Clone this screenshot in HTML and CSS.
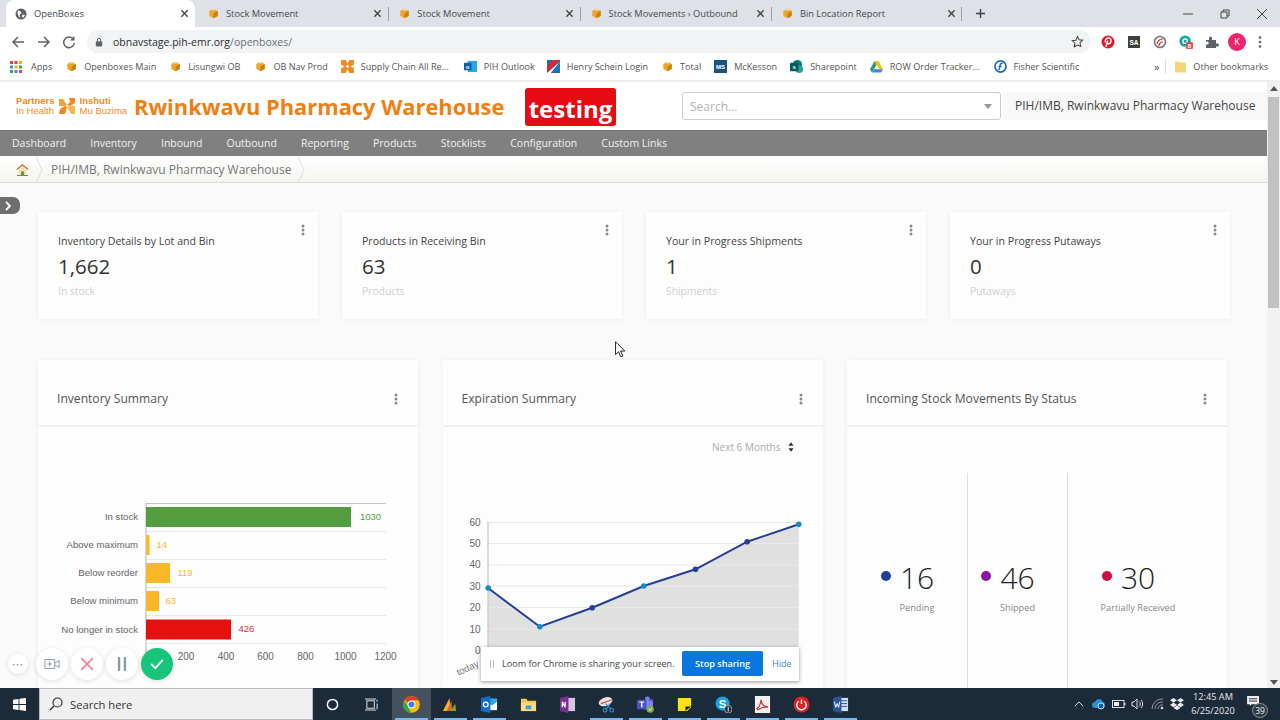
FILE: index.html
```html
<!DOCTYPE html>
<html lang="en">
<head>
<meta charset="utf-8">
<title>OpenBoxes</title>
<link rel="stylesheet" href="styles.css">
</head>
<body>
<svg class="defs" width="0" height="0" aria-hidden="true">
  <symbol id="ob" viewBox="0 0 12 12">
    <path d="M6 .8l4.600 2.600v5.200L6 11.200 1.400 8.600V3.400z" fill="#eba72c"/>
    <path d="M6 6l4.600-2.600v5.200L6 11.200z" fill="#c97f12"/>
    <path d="M3.500 2l2.500-1.200L8.500 2 6 3.400z" fill="#f8d98a"/>
  </symbol>
  <symbol id="kebab" viewBox="0 0 4 12">
    <circle cx="2" cy="2" r="1.500"/><circle cx="2" cy="6" r="1.500"/><circle cx="2" cy="10" r="1.500"/>
  </symbol>
  <symbol id="cross" viewBox="0 0 10 10">
    <path d="M1.500 1.500l7 7M8.500 1.500l-7 7" fill="none" stroke="currentColor" stroke-width="1.500"/>
  </symbol>
</svg>
<div class="screen">
  <div class="tabstrip">
    <div class="tab tab-active">
      <svg class="tab-icon" viewBox="0 0 12 12"><circle cx="6" cy="6" r="5.500" fill="#5f6368"/><path d="M3 2.500l3 1 .5 2-2 1 1 3.500-2-2-1-3zM7.500 6.500l2.500.5-1.500 2.500-1.500-.5z" fill="#fff"/></svg>
      <span class="tab-title">OpenBoxes</span>
      <svg class="tab-close"><use href="#cross"/></svg>
    </div>
    <div class="tab"><svg class="tab-icon"><use href="#ob"/></svg><span class="tab-title">Stock Movement</span><svg class="tab-close"><use href="#cross"/></svg></div>
    <div class="tab tab-sep"><svg class="tab-icon"><use href="#ob"/></svg><span class="tab-title">Stock Movement</span><svg class="tab-close"><use href="#cross"/></svg></div>
    <div class="tab tab-sep"><svg class="tab-icon"><use href="#ob"/></svg><span class="tab-title">Stock Movements › Outbound</span><svg class="tab-close"><use href="#cross"/></svg></div>
    <div class="tab tab-sep tab-end"><svg class="tab-icon"><use href="#ob"/></svg><span class="tab-title">Bin Location Report</span><svg class="tab-close"><use href="#cross"/></svg></div>
    <svg class="new-tab" viewBox="0 0 12 12"><path d="M6 1v10M1 6h10" stroke="#3c4043" stroke-width="1.500" fill="none"/></svg>
    <div class="window-controls">
      <svg viewBox="0 0 12 12"><path d="M1 6h10" stroke="#444" fill="none"/></svg>
      <svg viewBox="0 0 12 12"><path d="M2 4h6v6H2zM4 4V2h6v6H8" stroke="#444" fill="none"/></svg>
      <svg viewBox="0 0 12 12"><path d="M1 1l10 10M11 1L1 11" stroke="#444" fill="none"/></svg>
    </div>
  </div>

  <div class="toolbar">
    <svg class="tool" viewBox="0 0 14 14"><path d="M13 7H2M7 2L2 7l5 5" fill="none" stroke="#5f6368" stroke-width="1.500"/></svg>
    <svg class="tool" viewBox="0 0 14 14"><path d="M1 7h11M7 2l5 5-5 5" fill="none" stroke="#5f6368" stroke-width="1.500"/></svg>
    <svg class="tool" viewBox="0 0 14 14"><path d="M11.500 4.500A5.300 5.300 0 1 0 12.300 8" fill="none" stroke="#5f6368" stroke-width="1.500"/><path d="M12.500 1v4.500H8z" fill="#5f6368"/></svg>
    <div class="omnibox">
      <svg class="lock" viewBox="0 0 10 12"><rect x="1" y="5" width="8" height="6.500" rx="1" fill="#5f6368"/><path d="M3 5V3.500a2 2 0 0 1 4 0V5" fill="none" stroke="#5f6368" stroke-width="1.200"/></svg>
      <span class="url">obnavstage.pih-emr.org<span class="url-path">/openboxes/</span></span>
      <svg class="star" viewBox="0 0 14 14"><path d="M7 1.500l1.700 3.600 3.900.5-2.900 2.700.8 3.900L7 10.800l-3.500 1.900.8-3.900-2.900-2.700 3.900-.5z" fill="none" stroke="#444" stroke-width="1.100"/></svg>
    </div>
    <div class="extensions">
      <svg viewBox="0 0 14 14"><circle cx="7" cy="7" r="6.500" fill="#d81e2c"/><path d="M5 12l1.700-6.500M4.500 7.500C3.500 4.500 6 3 7.500 3S10.500 4.200 10 6.500 7.500 9.500 6.300 8" fill="none" stroke="#fff" stroke-width="1.400"/></svg>
      <svg viewBox="0 0 14 14"><rect x="1" y="1" width="12" height="12" fill="#3f3f3f"/><text x="7" y="9.500" class="ext-text">SA</text></svg>
      <svg viewBox="0 0 14 14"><circle cx="7" cy="7" r="5.500" fill="none" stroke="#777" stroke-width="1.600"/><path d="M4 9c1-4 3-5 6-5M6 11c0-2 1-4 4-4" fill="none" stroke="#c0392b" stroke-width="1.200"/></svg>
      <svg viewBox="0 0 16 16"><circle cx="7" cy="7" r="6.500" fill="#14a8a0"/><circle cx="7" cy="7" r="2.500" fill="none" stroke="#fff" stroke-width="1.500"/><rect x="8" y="8" width="8" height="8" rx="1.500" fill="#d9534f"/><text x="12" y="14.500" class="ext-badge">8</text></svg>
      <svg viewBox="0 0 14 14"><path d="M1 5h3V3a1.500 1.500 0 0 1 3 0v2h4v3.500h1.500a1.500 1.500 0 0 1 0 3H11V13H1V9.500h1.200a1.500 1.500 0 0 0 0-3H1z" fill="#5f6368"/></svg>
      <span class="avatar">K</span>
      <svg viewBox="0 0 4 14"><circle cx="2" cy="2.500" r="1.300" fill="#5f6368"/><circle cx="2" cy="7" r="1.300" fill="#5f6368"/><circle cx="2" cy="11.500" r="1.300" fill="#5f6368"/></svg>
    </div>
  </div>

  <div class="bookmarks">
    <div class="bookmark bm-apps"><svg viewBox="0 0 12 12"><g fill="#e8453c"><rect width="3" height="3"/><rect x="4.500" width="3" height="3"/></g><rect x="9" width="3" height="3" fill="#f4b400"/><rect y="4.500" width="3" height="3" fill="#4285f4"/><rect x="4.500" y="4.500" width="3" height="3" fill="#f4b400"/><rect x="9" y="4.500" width="3" height="3" fill="#34a853"/><rect y="9" width="3" height="3" fill="#34a853"/><rect x="4.500" y="9" width="3" height="3" fill="#4285f4"/><rect x="9" y="9" width="3" height="3" fill="#e8453c"/></svg><span>Apps</span></div>
    <div class="bookmark bm-main"><svg><use href="#ob"/></svg><span>Openboxes Main</span></div>
    <div class="bookmark bm-lis"><svg><use href="#ob"/></svg><span>Lisungwi OB</span></div>
    <div class="bookmark bm-nav"><svg><use href="#ob"/></svg><span>OB Nav Prod</span></div>
    <div class="bookmark bm-sup"><svg viewBox="0 0 14 14"><path d="M0 0h5l2 4 2-4h5v5l-4 2 4 2v5H9L7 10l-2 4H0V9l4-2-4-2z" fill="#ef8d22"/><circle cx="7" cy="7" r="1.500" fill="#fff"/></svg><span>Supply Chain All Re...</span></div>
    <div class="bookmark bm-out"><svg viewBox="0 0 14 14"><rect x="4" y="1" width="10" height="12" fill="#28a8ea"/><rect y="3" width="8" height="8" fill="#0f5fa8"/><text x="4" y="9.500" class="ext-text">o</text></svg><span>PIH Outlook</span></div>
    <div class="bookmark bm-hs"><svg viewBox="0 0 14 14"><rect width="14" height="14" fill="#1d6fb8"/><path d="M0 14L14 0H6L0 7z" fill="#e0262b"/><path d="M0 14L14 2 4 14z" fill="#fff"/></svg><span>Henry Schein Login</span></div>
    <div class="bookmark bm-tot"><svg><use href="#ob"/></svg><span>Total</span></div>
    <div class="bookmark bm-mck"><svg viewBox="0 0 14 14"><rect width="14" height="14" fill="#16557f"/><text x="7" y="10" class="ext-text">MS</text></svg><span>McKesson</span></div>
    <div class="bookmark bm-shp"><svg viewBox="0 0 14 14"><circle cx="8" cy="5" r="5" fill="#0b7c7c"/><circle cx="10" cy="10" r="4" fill="#23a3a3"/><rect y="3" width="9" height="9" rx="1" fill="#075a5a"/><text x="4.500" y="10" class="ext-text">s</text></svg><span>Sharepoint</span></div>
    <div class="bookmark bm-row"><svg viewBox="0 0 14 14"><path d="M5 1h4l5 9H10z" fill="#fbbc05"/><path d="M5 1L0 10l2 3.500L7 5z" fill="#1fa463"/><path d="M2 13.500h10l2-3.500H4z" fill="#4285f4"/></svg><span>ROW Order Tracker...</span></div>
    <div class="bookmark bm-fis"><svg viewBox="0 0 14 14"><circle cx="7" cy="7" r="6" fill="none" stroke="#1b6fb8" stroke-width="1.800"/><path d="M9.500 3.500C7 3 6.500 5 6.300 7L5.500 11M4.800 7h3.500" fill="none" stroke="#1b6fb8" stroke-width="1.500"/></svg><span>Fisher Scientific</span></div>
    <span class="bm-more">»</span>
    <div class="bookmark bm-other"><svg viewBox="0 0 12 14"><path d="M0 1h4l1 1h7v11H0z" fill="#f6d57a"/></svg><span>Other bookmarks</span></div>
  </div>

  <div class="viewport">
    <div class="page">
      <header class="site-header">
        <div class="logo">
          <div class="logo-words"><b>Partners</b><span>In Health</span></div>
          <svg class="logo-mark" viewBox="0 0 16 16"><path d="M0 1h4l4 6-2 1H0z" fill="#f2a33a"/><path d="M10 0h6v5l-5 3-3-1 3-3z" fill="#f08a1d"/><path d="M0 16l1-5 5-3 2 1-2 7z" fill="#f08a1d"/><path d="M8 9l3-1h5v8h-4z" fill="#f7b84b"/></svg>
          <div class="logo-words"><b>Inshuti</b><span>Mu Buzima</span></div>
        </div>
        <div class="site-title">Rwinkwavu Pharmacy Warehouse</div>
        <div class="env-badge">testing</div>
        <div class="search-box"><span>Search...</span><i class="caret"></i></div>
        <div class="location">PIH/IMB, Rwinkwavu Pharmacy Warehouse</div>
      </header>
      <nav class="main-nav">
        <a>Dashboard</a><a>Inventory</a><a>Inbound</a><a>Outbound</a><a>Reporting</a><a>Products</a><a>Stocklists</a><a>Configuration</a><a>Custom Links</a>
      </nav>
      <div class="breadcrumb">
        <svg class="home" viewBox="0 0 14 14"><path d="M7 1L0 7h2l5-4 5 4h2z" fill="#c8702a"/><path d="M3 7l4-3 4 3v6H3z" fill="#f3e3b0"/><rect x="5.500" y="9" width="3" height="4" fill="#6d8a3c"/><rect x="1" y="13" width="12" height="1" fill="#4b8f3a"/></svg>
        <svg class="crumb-sep" viewBox="0 0 8 26"><path d="M1 0l6 13-6 13" fill="none" stroke="#ddd"/></svg>
        <span>PIH/IMB, Rwinkwavu Pharmacy Warehouse</span>
        <svg class="crumb-sep" viewBox="0 0 8 26"><path d="M1 0l6 13-6 13" fill="none" stroke="#ddd"/></svg>
      </div>
      <main class="content">
        <section class="tiles">
          <article class="tile"><svg class="kebab-sm"><use href="#kebab"/></svg><h3>Inventory Details by Lot and Bin</h3><p class="tile-num">1,662</p><p class="tile-sub">In stock</p></article>
          <article class="tile"><svg class="kebab-sm"><use href="#kebab"/></svg><h3>Products in Receiving Bin</h3><p class="tile-num">63</p><p class="tile-sub">Products</p></article>
          <article class="tile"><svg class="kebab-sm"><use href="#kebab"/></svg><h3>Your in Progress Shipments</h3><p class="tile-num">1</p><p class="tile-sub">Shipments</p></article>
          <article class="tile"><svg class="kebab-sm"><use href="#kebab"/></svg><h3>Your in Progress Putaways</h3><p class="tile-num">0</p><p class="tile-sub">Putaways</p></article>
        </section>
        <section class="panels">
          <article class="panel">
            <div class="panel-head"><h2>Inventory Summary</h2><svg class="kebab-lg"><use href="#kebab"/></svg></div>
            <svg class="chart" viewBox="38 427 380 260" width="380" height="260">
              <g class="grid-line"><path d="M146 531.500h240M146 559.500h240M146 587.500h240M146 615.500h240M146 643.500h240"/></g>
              <path d="M146 503.500h240M146 503v150" class="axis"/>
              <rect x="146" y="507" width="205" height="20" fill="#549e3f"/>
              <rect x="146" y="535" width="3.500" height="20" fill="#fbb826"/>
              <rect x="146" y="563" width="24" height="20" fill="#fbb826"/>
              <rect x="146" y="591" width="13" height="20" fill="#fbb826"/>
              <rect x="146" y="619.500" width="85" height="20" fill="#e61010"/>
              <g class="bar-label">
                <text x="138" y="520">In stock</text><text x="138" y="548">Above maximum</text><text x="138" y="576">Below reorder</text><text x="138" y="604">Below minimum</text><text x="138" y="633">No longer in stock</text>
              </g>
              <g class="bar-val">
                <text x="360" y="520" fill="#549e3f">1030</text><text x="156.500" y="548" fill="#fbb826">14</text><text x="177.500" y="576" fill="#fbb826">119</text><text x="165.500" y="604" fill="#fbb826">63</text><text x="238.500" y="632" fill="#d33">426</text>
              </g>
              <g class="tick">
                <text x="186" y="660">200</text><text x="226" y="660">400</text><text x="265.500" y="660">600</text><text x="305.500" y="660">800</text><text x="345.500" y="660">1000</text><text x="385.500" y="660">1200</text>
              </g>
            </svg>
          </article>
          <article class="panel">
            <div class="panel-head"><h2>Expiration Summary</h2><svg class="kebab-lg"><use href="#kebab"/></svg></div>
            <div class="range"><span>Next 6 Months</span><svg viewBox="0 0 7 11"><path d="M3.500 0l3 4H.5zM3.500 11l-3-4h6z" fill="#333"/></svg></div>
            <svg class="chart" viewBox="442.500 465 380 222" width="380" height="222">
              <path d="M487.500 588L539.300 626.700 591.700 607.700 643.300 586 695 569.300 746.700 541.700 798.300 524.300V650H487.500z" fill="#e0e0e0"/>
              <path class="grid-line" d="M487.500 522.500H798M487.500 543.500H798M487.500 565H798M487.500 586H798M487.500 607.500H798M487.500 629H798"/>
              <path class="axis" d="M487.500 522v130"/>
              <path d="M487.500 588L539.300 626.700 591.700 607.700 643.300 586 695 569.300 746.700 541.700 798.300 524.300" fill="none" stroke="#253f92" stroke-width="2"/>
              <g fill="#0f8fc8"><circle cx="487.700" cy="588" r="2.800"/><circle cx="539.300" cy="626.700" r="2.800"/><circle cx="643.300" cy="586" r="2.800"/><circle cx="798.300" cy="524.300" r="2.800"/></g>
              <g fill="#253f92"><circle cx="591.700" cy="607.700" r="2.800"/><circle cx="695" cy="569.300" r="2.800"/><circle cx="746.700" cy="541.700" r="2.800"/></g>
              <g class="y-tick">
                <text x="480" y="526">60</text><text x="480" y="547">50</text><text x="480" y="568">40</text><text x="480" y="589.500">30</text><text x="480" y="611">20</text><text x="480" y="632.500">10</text><text x="480" y="653.500">0</text>
              </g>
              <text class="x-tick" transform="translate(479 666) rotate(-25)">today</text>
            </svg>
          </article>
          <article class="panel">
            <div class="panel-head"><h2>Incoming Stock Movements By Status</h2><svg class="kebab-lg"><use href="#kebab"/></svg></div>
            <div class="status-grid">
              <div class="status status-a"><p class="status-num"><i class="dot dot-blue"></i>16</p><p class="status-label">Pending</p></div>
              <div class="status status-b"><p class="status-num"><i class="dot dot-purple"></i>46</p><p class="status-label">Shipped</p></div>
              <div class="status status-c"><p class="status-num"><i class="dot dot-red"></i>30</p><p class="status-label">Partially Received</p></div>
            </div>
          </article>
        </section>
      </main>
    </div>
    <div class="scrollbar">
      <svg class="sb-arrow" viewBox="0 0 8 5"><path d="M4 0l4 5H0z" fill="#555"/></svg>
      <div class="sb-thumb"></div>
      <svg class="sb-arrow sb-down" viewBox="0 0 8 5"><path d="M4 5L8 0H0z" fill="#555"/></svg>
    </div>
  </div>

  <footer class="taskbar">
    <div class="start"><svg viewBox="0 0 14 14"><path d="M0 2l6-1v5.500H0zM7 .8L14 0v6.500H7zM0 7.500h6V13l-6-1zM7 7.500h7V14l-7-1z" fill="#fff"/></svg></div>
    <div class="task-search"><svg viewBox="0 0 14 14"><circle cx="8.500" cy="5.500" r="4.500" fill="none" stroke="#333" stroke-width="1.200"/><path d="M5 9l-4 4" stroke="#333" stroke-width="1.400"/></svg><span>Search here</span></div>
    <div class="task-icon task-sys"><svg viewBox="0 0 14 14"><circle cx="7" cy="7" r="5.500" fill="none" stroke="#fff" stroke-width="1.600"/></svg></div>
    <div class="task-icon task-sys"><svg viewBox="0 0 14 14"><path d="M2 3h8v8H2zM0 1h12M0 13h12M13 2v2M13 6v6" fill="none" stroke="#ddd" stroke-width="1.100"/></svg></div>
    <div class="task-icon task-chrome on"><svg viewBox="0 0 24 24"><circle cx="12" cy="12" r="10.500" fill="#fbbc05"/><path d="M12 1.500a10.500 10.500 0 0 1 9.100 5.200H12l-5 3-4.100-4.700A10.500 10.500 0 0 1 12 1.500z" fill="#e33b2e"/><path d="M2.900 6.700L8 15l3.500 7.500A10.500 10.500 0 0 1 2.900 6.700z" fill="#2da94f"/><circle cx="12" cy="12" r="5" fill="#fff"/><circle cx="12" cy="12" r="3.800" fill="#3f7fe8"/></svg></div>
    <div class="task-icon on"><svg viewBox="0 0 18 18"><path d="M1 16L8 2l1 14z" fill="#f6b12c"/><path d="M5 16l5-11 1 11z" fill="#e0632c"/><path d="M9 16l5-8 1 8z" fill="#7aa82e"/></svg></div>
    <div class="task-icon on"><svg viewBox="0 0 18 18"><rect x="6" y="3" width="11" height="12" fill="#fff"/><path d="M6 3h11v3l-5.500 4L6 6z" fill="#28a8ea"/><path d="M0 2l10-2v18L0 16z" fill="#0f6fc6"/><circle cx="5" cy="9" r="2.500" fill="none" stroke="#fff" stroke-width="1.400"/></svg></div>
    <div class="task-icon"><svg viewBox="0 0 18 18"><path d="M1 3h6l1 2h9v11H1z" fill="#f4c552"/><rect x="1" y="7" width="16" height="9" fill="#fadb85"/><rect x="6" y="10" width="6" height="4" fill="#3f9fd8"/></svg></div>
    <div class="task-icon"><svg viewBox="0 0 18 18"><rect x="8" y="2" width="9" height="14" fill="#d9c3e0"/><path d="M1 2l9-2v18l-9-2z" fill="#7b2f90"/><path d="M3.500 12V6l3 6V6" fill="none" stroke="#fff" stroke-width="1.300"/></svg></div>
    <div class="task-icon on"><svg viewBox="0 0 18 18"><ellipse cx="8" cy="6" rx="7.500" ry="4.500" fill="#e8e2e2" transform="rotate(-20 8 6)"/><path d="M3 8l12-4" stroke="#c0504d" stroke-width="1.300"/><path d="M8 8l6 6M13 8l-5 7" stroke="#2a8fd0" stroke-width="1.200"/><circle cx="7.500" cy="15" r="2" fill="none" stroke="#2a8fd0" stroke-width="1.200"/><circle cx="14.500" cy="15" r="2" fill="none" stroke="#2a8fd0" stroke-width="1.200"/></svg></div>
    <div class="task-icon on"><svg viewBox="0 0 18 18"><circle cx="11" cy="3" r="2.500" fill="#7b83eb"/><circle cx="15" cy="5" r="2" fill="#5059c9"/><rect x="6" y="5" width="11" height="9" rx="2" fill="#7b83eb"/><rect y="4" width="10" height="10" rx="1" fill="#4b53bc"/><path d="M2.500 6.500h5M5 6.500v5.500" stroke="#fff" stroke-width="1.400"/><circle cx="14" cy="14" r="3.800" fill="#7cb33c"/><path d="M12.300 14l1.300 1.300 2-2.300" fill="none" stroke="#fff"/></svg></div>
    <div class="task-icon on"><svg viewBox="0 0 18 18"><path d="M2 2h14v10l-4 4H2z" fill="#ffe212"/><path d="M10 16v-5h6z" fill="#222"/></svg></div>
    <div class="task-icon on"><svg viewBox="0 0 18 18"><circle cx="8" cy="8" r="7.500" fill="#1a9fe0"/><text x="8" y="12.500" class="skype">S</text><circle cx="14" cy="14" r="4" fill="#1b2b3a" stroke="#aaa"/><path d="M14 11.500v5" stroke="#fff"/></svg></div>
    <div class="task-icon on"><svg viewBox="0 0 18 18"><rect x="1" y="0" width="16" height="18" fill="#f3f1f1"/><path d="M3 13c3-1 4-5 4.500-9 0 4 3 7 7.500 7.500-4 0-8 1-11 3z" fill="none" stroke="#c8282c" stroke-width="1.200"/></svg></div>
    <div class="task-icon on"><svg viewBox="0 0 18 18"><circle cx="9" cy="9" r="8.500" fill="#e01f26"/><path d="M6 5.500a5 5 0 1 0 6 0" fill="none" stroke="#fff" stroke-width="1.500"/><path d="M9 3.500v5" stroke="#fff" stroke-width="1.500"/></svg></div>
    <div class="task-icon on"><svg viewBox="0 0 18 18"><rect x="8" y="2" width="9" height="14" fill="#cfe0f5"/><path d="M8 5h8M8 8h8M8 11h8" stroke="#2a5699"/><path d="M1 2l9-2v18l-9-2z" fill="#2a5699"/><path d="M2.500 6l1.500 6 1.500-4 1.500 4 1.200-6" fill="none" stroke="#fff"/></svg></div>
    <div class="tray">
      <svg viewBox="0 0 12 7" class="tray-chev"><path d="M1 6l5-5 5 5" fill="none" stroke="#ddd" stroke-width="1.200"/></svg>
      <svg viewBox="0 0 14 12"><path d="M3 10a3 3 0 0 1 0-6 4 4 0 0 1 7.500-.5A3.500 3.500 0 0 1 11 10z" fill="#2a8fe0"/><circle cx="9" cy="8" r="3" fill="#0d5fa8" stroke="#cde"/></svg>
      <svg viewBox="0 0 14 10"><rect x=".5" y="1.500" width="11.500" height="7" fill="none" stroke="#ddd"/><rect x="2" y="3" width="5" height="4" fill="#eee"/><rect x="12" y="4" width="1.500" height="2" fill="#ddd"/></svg>
      <svg viewBox="0 0 14 12"><path d="M1 4h2l3-3v10L3 8H1z" fill="none" stroke="#ddd"/><path d="M8 3.500a3 3 0 0 1 0 5M10 2a5.500 5.500 0 0 1 0 8" fill="none" stroke="#ddd"/></svg>
      <svg viewBox="0 0 14 12"><path d="M1 11A10 10 0 0 1 12 1M4 11a7 7 0 0 1 8-7M7 11a4 4 0 0 1 5-4" fill="none" stroke="#999"/><circle cx="11" cy="10" r="1.300" fill="#ddd"/></svg>
      <svg viewBox="0 0 14 12"><path d="M3.500 0L7 2.300 3.500 4.600 0 2.300zM10.500 0L14 2.300l-3.500 2.300L7 2.300zM3.500 4.600L7 6.900 3.500 9.200 0 6.900zM10.500 4.600L14 6.900l-3.500 2.300L7 6.900zM7 7.600l3.500 2.300L7 12 3.500 9.900z" fill="#eee"/></svg>
    </div>
    <div class="clock"><span>12:45 AM</span><span>6/25/2020</span></div>
    <div class="notify"><svg viewBox="0 0 14 12"><path d="M0 0h13v9H5l-2 2V9H0z" fill="#eee"/><path d="M2 3h9M2 5.500h9" stroke="#1b2b3a"/></svg><span class="notify-count">39</span></div>
  </footer>

  <div class="sidebar-toggle"><svg viewBox="0 0 6 10"><path d="M1 1l4 4-4 4" fill="none" stroke="#fff" stroke-width="1.800"/></svg></div>

  <svg class="cursor" viewBox="0 0 12 18"><path d="M.5.500v14l3.500-3 2.300 5.500 2.200-1-2.300-5.300h4.500z" fill="#fff" stroke="#111"/></svg>

  <div class="loom-tools">
    <div class="lt lt-dots">···</div>
    <div class="lt"><svg viewBox="0 0 18 12"><path d="M1 1h11v10H1zM12 5l5-3v8l-5-3M4 6h5M6.500 3.500v5" fill="none" stroke="#8a9aa6" stroke-width="1.100"/></svg></div>
    <div class="lt"><svg viewBox="0 0 12 12"><path d="M1 1l10 10M11 1L1 11" stroke="#f0838a" stroke-width="1.500" fill="none"/></svg></div>
    <div class="lt"><svg viewBox="0 0 10 12"><path d="M2.500 0v12M7.500 0v12" stroke="#8a9aa6" stroke-width="2" fill="none"/></svg></div>
    <div class="lt lt-done"><svg viewBox="0 0 12 10"><path d="M1 5l3.500 3.500L11 1.500" stroke="#fff" stroke-width="1.600" fill="none"/></svg></div>
  </div>

  <div class="loom-bar">
    <span class="loom-pause"></span>
    <span class="loom-msg">Loom for Chrome is sharing your screen.</span>
    <span class="loom-stop">Stop sharing</span>
    <span class="loom-hide">Hide</span>
  </div>
</div>
</body>
</html>
```
FILE: styles.css
```css
* { box-sizing: border-box; }
html, body { margin: 0; padding: 0; }
body { font-family: "Open Sans", "Noto Sans", sans-serif; background: #fff; overflow: hidden; }
p, h2, h3 { margin: 0; font-weight: 400; }
.defs { position: absolute; }

.screen { position: relative; width: 1280px; height: 720px; display: flex; flex-direction: column; overflow: hidden; }

/* browser tabs */
.tabstrip { flex: none; height: 27px; background: #dee1e6; display: flex; align-items: center; padding-left: 6px; }
.tab { width: 191.300px; height: 27px; padding: 0 5px 0 11px; display: flex; align-items: center; font-size: 9.300px; color: #45494e; position: relative; }
.tab-active { background: #fff; border-radius: 8px 8px 0 0; width: 189px; margin-right: 2px; padding-left: 10px; }
.tab-icon { width: 11px; height: 11px; flex: none; margin-right: 7px; }
.tab-active .tab-icon { width: 12px; height: 12px; margin-left: -1px; }
.tab-title { flex: 1; white-space: nowrap; overflow: hidden; }
.tab-close { width: 9px; height: 9px; color: #444; flex: none; margin-right: 1px; }
.tab-sep::before { content: ""; position: absolute; left: 0; top: 7px; height: 14px; border-left: 1px solid #9aa0a6; }
.tab-end::after { content: ""; position: absolute; right: 0; top: 7px; height: 14px; border-left: 1px solid #9aa0a6; }
.new-tab { width: 11px; height: 11px; margin-left: 13px; }
.window-controls { margin-left: auto; display: flex; gap: 25px; padding-right: 12px; align-self: flex-start; padding-top: 8px; }
.window-controls svg { width: 12px; height: 12px; }

/* toolbar */
.toolbar { flex: none; height: 27px; background: #fff; display: flex; align-items: center; padding: 2px 0 0 11px; }
.tool { width: 14px; height: 14px; margin-right: 12px; flex: none; }
.tool:nth-child(3) { margin-left: -1px; }
.omnibox { width: 1004px; height: 23px; margin-left: -1px; border-radius: 12px; background: #f1f3f4; display: flex; align-items: center; padding: 0 7px 0 8px; font-size: 10.500px; }
.lock { width: 8px; height: 10px; margin-right: 10px; }
.url { color: #2b2e31; flex: 1; }
.url-path { color: #6b6f73; }
.star { width: 13px; height: 13px; }
.extensions { display: flex; align-items: center; margin-left: 10px; gap: 12px; }
.extensions svg { width: 14px; height: 14px; flex: none; }
.extensions svg:last-child { width: 4px; margin-left: 3px; }
.ext-text { font: 700 6.500px "Liberation Sans", sans-serif; fill: #fff; text-anchor: middle; }
.ext-badge { font: 700 7px "Liberation Sans", sans-serif; fill: #fff; text-anchor: middle; }
.avatar { width: 18px; height: 18px; border-radius: 50%; background: #f0246e; color: #fff; font-size: 9px; display: flex; align-items: center; justify-content: center; margin: 0 -3px; }

/* bookmarks */
.bookmarks { flex: none; height: 28px; background: #fff; border-bottom: 2px solid #eeeeee; display: flex; align-items: center; font-size: 9.100px; color: #555; padding: 0 0 1px 10px; }
.bookmark { display: flex; align-items: center; white-space: nowrap; }
.bookmark svg { width: 11px; height: 11px; margin-right: 7px; flex: none; }
.bm-apps svg { width: 12px; height: 12px; margin-right: 9px; }
.bm-main { margin-left: 14px; }
.bm-lis { margin-left: 14px; }
.bm-nav { margin-left: 15px; }
.bm-sup { margin-left: 13px; }
.bm-sup svg, .bm-out svg, .bm-hs svg, .bm-mck svg, .bm-shp svg, .bm-row svg, .bm-fis svg { width: 13px; height: 13px; }
.bm-out { margin-left: 15px; }
.bm-hs { margin-left: 12px; }
.bm-tot { margin-left: 14px; }
.bm-mck { margin-left: 13px; }
.bm-shp { margin-left: 13px; }
.bm-row { margin-left: 13px; }
.bm-fis { margin-left: 14px; }
.bm-more { margin-left: auto; font-size: 11px; padding-right: 6px; border-right: 1px solid #ddd; line-height: 15px; }
.bm-other { margin: 0 12px 0 9px; }
.bm-other svg { height: 14px; width: 11px; }

/* viewport */
.viewport { flex: 1; min-height: 0; display: flex; overflow: hidden; }
.page { flex: 1; min-width: 0; display: flex; flex-direction: column; background: #fafafa; overflow: hidden; }
.scrollbar { width: 13px; flex: none; background: #f1f1f1; display: flex; flex-direction: column; align-items: center; padding: 4px 0 3px; }
.sb-arrow { width: 8px; height: 5px; flex: none; }
.sb-thumb { width: 11px; height: 211px; margin-top: 6px; background: #c1c1c1; }
.sb-down { margin-top: auto; }

/* site header */
.site-header { flex: none; height: 48px; background: #fff; display: flex; align-items: center; padding-left: 16px; }
.logo { display: flex; align-items: center; color: #f08a1d; font: 9.500px/8.500px "Liberation Sans", sans-serif; width: 118px; }
.logo-words { display: flex; flex-direction: column; gap: 1px; white-space: nowrap; }
.logo-words b { font-weight: 700; }
.logo-mark { width: 16px; height: 16px; margin: 0 5px 0 4px; }
.site-title { font-weight: 700; font-size: 21.850px; color: #f07f12; white-space: nowrap; width: 391px; }
.env-badge { width: 91px; height: 38px; margin-top: 2px; padding-top: 2px; border-radius: 3px; background: #e60b14; color: #fff; font-weight: 700; font-size: 24px; display: flex; align-items: center; justify-content: center; }
.search-box { width: 319px; height: 28px; margin-left: 66px; border: 1px solid #ccc; border-radius: 3px; display: flex; align-items: center; padding: 0 8px 0 7px; font-size: 12px; color: #b3b3b3; background: #fff; justify-content: space-between; }
.caret { width: 0; height: 0; border: 4px solid transparent; border-top: 5px solid #999; border-bottom: 0; }
.location { flex: 1; height: 28px; margin-left: 2px; padding-left: 12px; background: #f8f8f8; font-size: 12px; line-height: 28px; color: #444; white-space: nowrap; }

.main-nav { flex: none; height: 26px; background: #808080; border-top: 1px solid #777; display: flex; align-items: center; padding: 0 0 2px 12px; gap: 24.100px; font-size: 10.500px; color: #f0f0f0; }

.breadcrumb { flex: none; height: 27px; background: linear-gradient(#fff, #f4f4f0); border-bottom: 1px solid #ddd; display: flex; align-items: center; padding: 1px 0 0 16px; font-size: 12px; color: #777; }
.home { width: 13px; height: 13px; }
.crumb-sep { width: 8px; height: 26px; margin: 0 6px; }
.breadcrumb span { margin-left: 2px; }

/* content */
.content { flex: 1; min-height: 0; padding: 29px 0 0 38px; overflow: hidden; }
.tiles { display: grid; grid-template-columns: repeat(4, 280px); column-gap: 24px; }
.tile { position: relative; height: 107px; background: #fdfdfd; box-shadow: 0 0 6px rgba(0,0,0,.05); padding: 21px 20px 0; }
.tile h3 { font-size: 10.600px; line-height: 16px; color: #444; }
.tile-num { font-size: 20.500px; line-height: 30px; margin-top: 2px; color: #333; }
.tile-sub { font-size: 10.300px; line-height: 14px; margin-top: 3px; color: #cfcfcf; }
.kebab-sm { position: absolute; right: 13px; top: 12px; width: 4px; height: 12px; fill: #8b8b80; }

.panels { display: grid; grid-template-columns: repeat(3, 380px); column-gap: 24.500px; margin-top: 41px; }
.panel { background: #fdfdfd; box-shadow: 0 0 6px rgba(0,0,0,.05); height: 330px; overflow: hidden; }
.panel-head { height: 67px; border-bottom: 2px solid #f1f1f1; display: flex; align-items: center; justify-content: space-between; padding: 22px 20px 10px 19px; }
.panel-head h2 { font-size: 12.100px; color: #555; }
.kebab-lg { width: 4px; height: 12px; fill: #8a8a8a; }
.chart { display: block; }
.grid-line { fill: none; stroke: #e8e8e8; }
.axis { fill: none; stroke: #c4c4c4; stroke-width: 1.200; }
.bar-label text { font: 9.600px "Liberation Sans", sans-serif; fill: #666; text-anchor: end; }
.bar-val text { font: 9.500px "Liberation Sans", sans-serif; }
.tick text { font: 10px "Liberation Sans", sans-serif; fill: #666; text-anchor: middle; }
.y-tick text { font: 10px "Liberation Sans", sans-serif; fill: #666; text-anchor: end; }
.x-tick { font: 9.500px "Liberation Sans", sans-serif; fill: #777; text-anchor: end; }
.range { height: 38px; display: flex; align-items: center; justify-content: flex-end; padding: 2px 29px 0 0; font-size: 10px; color: #aaa; gap: 7px; }
.range svg { width: 6px; height: 10px; }

.status-grid { display: grid; grid-template-columns: 120px 101px 159px; margin-top: 46px; height: 215px; }
.status { display: flex; flex-direction: column; align-items: center; padding-top: 85px; }
.status-b { border-left: 1px solid #ddd; border-right: 1px solid #ddd; }
.status-a { padding-left: 20px; }
.status-c { padding-right: 19px; }
.status-num { position: relative; font-size: 30px; font-weight: 300; line-height: 40px; color: #222; }
.dot { position: absolute; left: -19px; top: 13px; width: 10px; height: 10px; border-radius: 50%; }
.dot-blue { background: #1f3f9e; }
.dot-purple { background: #8a179e; }
.dot-red { background: #d00a45; }
.status-label { margin-top: 3px; font-size: 9.200px; line-height: 14px; color: #888; white-space: nowrap; }

/* taskbar */
.taskbar { flex: none; height: 32px; background: #1b2b3a; display: flex; align-items: center; color: #eee; }
.start { width: 39px; height: 32px; display: flex; align-items: center; justify-content: center; }
.start svg { width: 13px; height: 13px; }
.task-search { width: 274px; height: 32px; background: #f0f0f0; border: 1px solid #b8bcc0; display: flex; align-items: center; padding-left: 9px; font-size: 11.200px; color: #333; }
.task-search svg { width: 14px; height: 14px; margin-right: 7px; }
.task-icon { width: 39px; height: 32px; flex: none; position: relative; display: flex; align-items: center; justify-content: center; }
.task-icon svg { width: 17px; height: 17px; }
.task-sys svg { width: 13px; height: 13px; }
.task-icon.on::after { content: ""; position: absolute; left: 3px; right: 3px; bottom: 0; height: 2px; background: #76b9ed; }
.task-chrome { background: #45525e; margin-left: 1px; }
.task-chrome svg { width: 19px; height: 19px; }
.tray { margin-left: auto; display: flex; align-items: center; gap: 5.500px; }
.tray svg { width: 14px; height: 12px; }
.tray .tray-chev { width: 10px; height: 6px; margin-right: 3px; }
.clock { width: 52px; margin-left: 3px; display: flex; flex-direction: column; align-items: center; font-size: 9.200px; line-height: 14px; color: #e8e8e8; white-space: nowrap; }
.notify { position: relative; width: 33px; height: 32px; margin-left: 8px; display: flex; align-items: center; }
.notify svg { width: 13px; height: 11px; margin-top: -6px; }
.notify-count { position: absolute; left: 5px; top: 15px; width: 16px; height: 15px; border-radius: 50%; background: #2b3a48; border: 1px solid #888; font-size: 8.500px; line-height: 13px; text-align: center; }
.skype { font: 700 12px "Liberation Sans", sans-serif; fill: #fff; text-anchor: middle; }

/* overlays */
.sidebar-toggle { position: absolute; left: 0; top: 197px; width: 20px; height: 17px; border-radius: 0 7px 7px 0; background: #6e6e6e; display: flex; align-items: center; justify-content: center; padding-right: 4px; }
.sidebar-toggle svg { width: 6px; height: 10px; }
.cursor { position: absolute; left: 615px; top: 341px; width: 11px; height: 17px; }

.loom-tools { position: absolute; left: 8px; top: 648px; display: flex; align-items: center; gap: 3px; }
.lt { width: 32px; height: 32px; border-radius: 50%; background: #fff; box-shadow: 0 1px 5px rgba(0,0,0,.12); display: flex; align-items: center; justify-content: center; }
.lt svg { width: 14px; height: 14px; }
.lt-dots { width: 20px; height: 20px; margin-right: 5px; color: #777; font-size: 11px; letter-spacing: 1px; line-height: 20px; }
.lt:nth-child(2) svg { width: 16px; }
.lt-done { background: #17c47c; }

.loom-bar { position: absolute; left: 481px; top: 647px; width: 318px; height: 34px; padding-bottom: 1px; background: #fff; box-shadow: 0 1px 4px rgba(0,0,0,.4); display: flex; align-items: center; font-size: 9.100px; color: #444; }
.loom-pause { width: 4px; height: 8px; margin: 0 8px 0 9px; border-left: 1px solid #bbb; border-right: 1px solid #bbb; flex: none; }
.loom-msg { white-space: nowrap; width: 180px; flex: none; }
.loom-stop { width: 81px; height: 25px; flex: none; border-radius: 2px; background: #0a76df; color: #fff; font-weight: 600; display: flex; align-items: center; justify-content: center; }
.loom-hide { margin-left: 9px; color: #3a7fd0; }
```
